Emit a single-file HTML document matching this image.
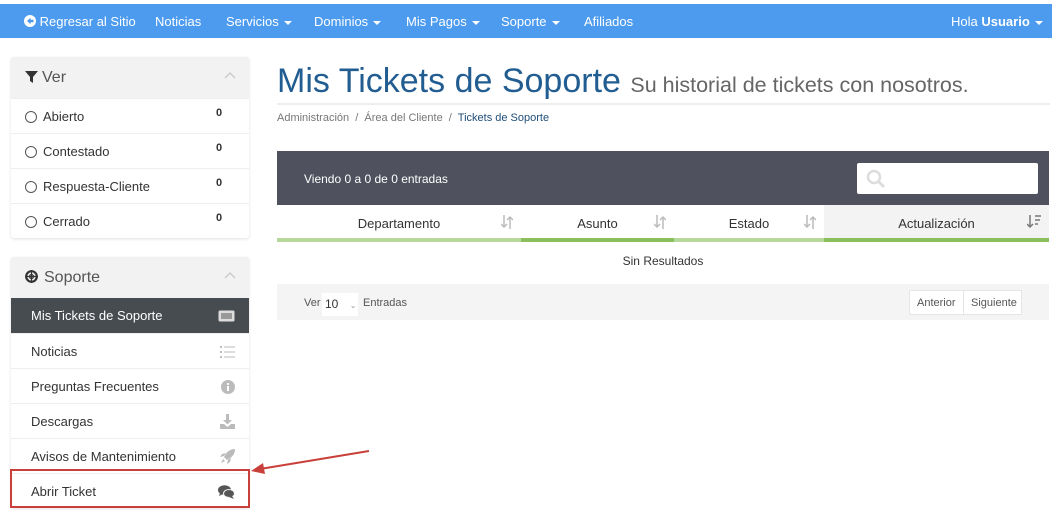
<!DOCTYPE html>
<html><head><meta charset="utf-8"><style>
*{box-sizing:border-box;margin:0;padding:0}
body{width:1052px;height:514px;overflow:hidden;background:#fff;font-family:"Liberation Sans",sans-serif;color:#333;position:relative}
.a{position:absolute}
.nav{left:0;top:4px;width:1052px;height:34px;background:#4c9bee;color:#fff;font-size:13px}
.nav span{position:absolute;top:10px}
.car{display:inline-block;border-left:4px solid transparent;border-right:4px solid transparent;border-top:4px solid #fff;vertical-align:middle;margin-left:5px}
.panel{background:#fff;border-radius:3px;box-shadow:0 1px 3px rgba(0,0,0,.12)}
.ph{background:#f2f2f2;height:41px;font-size:16px;color:#555;padding:12px 0 0 14px;position:relative}
.chev{position:absolute;right:13px;top:14px}
.row{height:35px;border-top:1px solid #eee;font-size:13px;color:#333;position:relative;padding:10px 0 0 14px}
.row .n{position:absolute;left:205px;top:8px;font-size:11px;font-weight:bold}
.rad{display:inline-block;width:12px;height:12px;border:1px solid #555;border-radius:50%;vertical-align:-2px;margin-right:6px}
.srow{height:35px;border-top:1px solid #eee;font-size:13px;padding:10px 0 0 20px;position:relative;color:#333}
.ic{position:absolute;right:14px;top:9px}
.th{top:205px;height:37px;font-size:13px;text-align:center;padding-top:11px;color:#333}
.sort{position:absolute;right:8px;top:10px}
</style></head><body>
<div class="a nav">
<span style="left:24px"><svg width="12" height="12" style="vertical-align:-1px"><circle cx="6" cy="6" r="6" fill="#fff"/><path d="M3 6 L6.5 2.8 L6.5 4.8 L9.5 4.8 L9.5 7.2 L6.5 7.2 L6.5 9.2 Z" fill="#4c9bee"/></svg> Regresar al Sitio</span>
<span style="left:155px">Noticias</span>
<span style="left:226px">Servicios<i class="car"></i></span>
<span style="left:314px">Dominios<i class="car"></i></span>
<span style="left:406px">Mis Pagos<i class="car"></i></span>
<span style="left:501px">Soporte<i class="car"></i></span>
<span style="left:584px">Afiliados</span>
<span style="left:951px">Hola <b>Usuario</b><i class="car"></i></span>
</div>

<div class="a panel" style="left:11px;top:57px;width:238px;height:181px">
<div class="ph"><svg width="13" height="13" style="vertical-align:-1px;margin-right:4px"><path d="M0 1 H13 L8 7 V13 L5 11 V7 Z" fill="#333"/></svg>Ver<svg class="chev" width="12" height="8"><path d="M1 7 L6 2 L11 7" stroke="#ccc" stroke-width="1.5" fill="none"/></svg></div>
<div class="row"><i class="rad"></i>Abierto<span class="n">0</span></div>
<div class="row"><i class="rad"></i>Contestado<span class="n">0</span></div>
<div class="row"><i class="rad"></i>Respuesta-Cliente<span class="n">0</span></div>
<div class="row"><i class="rad"></i>Cerrado<span class="n">0</span></div>
</div>

<div class="a panel" style="left:11px;top:257px;width:238px;height:251px">
<div class="ph"><svg width="13" height="13" style="vertical-align:-1px;margin-right:6px"><circle cx="6.5" cy="6.5" r="5.3" stroke="#333" stroke-width="2.2" fill="none"/><circle cx="6.5" cy="6.5" r="2" fill="none" stroke="#333" stroke-width="1.2"/><path d="M6.5 0V13M0 6.5H13" stroke="#333" stroke-width="1.2"/></svg>Soporte<svg class="chev" width="12" height="8"><path d="M1 7 L6 2 L11 7" stroke="#ccc" stroke-width="1.5" fill="none"/></svg></div>
<div class="srow" style="background:#474c51;color:#fff;border:0">Mis Tickets de Soporte<svg class="ic" style="top:12px" width="17" height="12"><rect x="0.5" y="0.5" width="16" height="11" rx="1.5" fill="#ddd"/><rect x="3" y="3" width="11" height="6" fill="#999"/></svg></div>
<div class="srow">Noticias<svg class="ic" style="top:12px" width="15" height="12"><g fill="#bbb"><rect x="0" y="0" width="2" height="2"/><rect x="0" y="5" width="2" height="2"/><rect x="0" y="10" width="2" height="2"/><rect x="4" y="0.5" width="11" height="1"/><rect x="4" y="5.5" width="11" height="1"/><rect x="4" y="10.5" width="11" height="1"/></g></svg></div>
<div class="srow">Preguntas Frecuentes<svg class="ic" style="top:11px" width="14" height="14"><circle cx="7" cy="7" r="7" fill="#bbb"/><rect x="6" y="6" width="2" height="5" fill="#fff"/><circle cx="7" cy="4" r="1.1" fill="#fff"/></svg></div>
<div class="srow">Descargas<svg class="ic" style="top:10px" width="15" height="15"><path d="M6 0H9V6H12L7.5 10.5L3 6H6Z" fill="#bbb"/><path d="M0 10H4L7.5 13L11 10H15V15H0Z" fill="#bbb"/></svg></div>
<div class="srow">Avisos de Mantenimiento<svg class="ic" style="top:10px" width="15" height="15"><path d="M15 0 C9 0 6 4 4 8 L7 11 C11 9 15 6 15 0Z" fill="#bbb"/><path d="M4 7 L0 8 L2 5 L6 4Z M8 11 L7 15 L10 13 L11 9Z M3 10 L5 12 L1 14Z" fill="#bbb"/></svg></div>
<div class="srow">Abrir Ticket<svg class="ic" style="top:11px" width="17" height="14"><ellipse cx="6.5" cy="5" rx="6.5" ry="4.8" fill="#555"/><path d="M2 8 L1 11 L5 9Z" fill="#555"/><ellipse cx="11" cy="8.5" rx="5.5" ry="4" fill="#555" stroke="#f4f4f4" stroke-width="1"/><path d="M14 11 L16 14 L11 12Z" fill="#555"/></svg></div>
</div>
<div class="a" style="left:10px;top:469px;width:240px;height:39px;border:2px solid #c9403a"></div>
<svg class="a" style="left:248px;top:445px" width="125" height="32"><line x1="121" y1="6" x2="12" y2="24" stroke="#c9403a" stroke-width="2"/><polygon points="3,26 15,18 17,29" fill="#c9403a"/></svg>

<div class="a" style="left:277px;top:62px;font-size:34px;color:#225d92;white-space:nowrap">Mis Tickets de Soporte <span style="font-size:21.5px;color:#666">Su historial de tickets con nosotros.</span></div>
<div class="a" style="left:277px;top:103px;width:773px;height:2px;background:#eee"></div>
<div class="a" style="left:277px;top:112px;font-size:11px;color:#777">Administración &nbsp;/&nbsp; Área del Cliente &nbsp;/&nbsp; <span style="color:#1f4e79">Tickets de Soporte</span></div>

<div class="a" style="left:277px;top:151px;width:772px;height:54px;background:#4f525e"></div>
<div class="a" style="left:304px;top:172px;font-size:12px;color:#fff">Viendo 0 a 0 de 0 entradas</div>
<div class="a" style="left:857px;top:163px;width:181px;height:31px;background:#fff;border-radius:2px"><svg width="30" height="30" style="position:absolute;left:6px;top:4px"><circle cx="11" cy="10" r="6" stroke="#ddd" stroke-width="2.5" fill="none"/><line x1="15" y1="14" x2="21" y2="20" stroke="#ddd" stroke-width="3"/></svg></div>

<div class="a th" style="left:277px;width:244px;border-bottom:4px solid #b7d89b">Departamento<svg class="sort" width="12" height="14"><path d="M3 0V12M0 9L3 12L6 9M9 14V2M6 5L9 2L12 5" stroke="#bbb" stroke-width="1.5" fill="none"/></svg></div>
<div class="a th" style="left:521px;width:153px;border-bottom:4px solid #8bbf5d">Asunto<svg class="sort" width="12" height="14"><path d="M3 0V12M0 9L3 12L6 9M9 14V2M6 5L9 2L12 5" stroke="#bbb" stroke-width="1.5" fill="none"/></svg></div>
<div class="a th" style="left:674px;width:150px;border-bottom:4px solid #b7d89b">Estado<svg class="sort" width="12" height="14"><path d="M3 0V12M0 9L3 12L6 9M9 14V2M6 5L9 2L12 5" stroke="#bbb" stroke-width="1.5" fill="none"/></svg></div>
<div class="a th" style="left:824px;width:225px;background:#f3f3f3;border-bottom:4px solid #8bbf5d">Actualización<svg class="sort" width="14" height="14"><path d="M3 0V12M0 9L3 12L6 9" stroke="#777" stroke-width="1.5" fill="none"/><path d="M8 1H14M8 5H13M8 9H11" stroke="#777" stroke-width="1.5"/></svg></div>
<div class="a" style="left:277px;top:254px;width:772px;text-align:center;font-size:12px">Sin Resultados</div>

<div class="a" style="left:277px;top:284px;width:772px;height:36px;background:#f4f4f4"></div>
<div class="a" style="left:304px;top:297px;font-size:11px;color:#555">Ver</div>
<div class="a" style="left:322px;top:293px;width:36px;height:23px;background:#fff;font-size:12px;padding:4px 0 0 3px">10 <span style="font-size:8px;color:#999;margin-left:8px">⌄</span></div>
<div class="a" style="left:363px;top:297px;font-size:11px;color:#555">Entradas</div>
<div class="a" style="left:909px;top:290px;width:113px;height:25px;background:#fff;border:1px solid #e5e5e5;font-size:11px;color:#555"><span style="position:absolute;left:7px;top:6px">Anterior</span><span style="position:absolute;left:53px;top:0;width:1px;height:23px;background:#e5e5e5"></span><span style="position:absolute;left:61px;top:6px">Siguiente</span></div>
</body></html>
